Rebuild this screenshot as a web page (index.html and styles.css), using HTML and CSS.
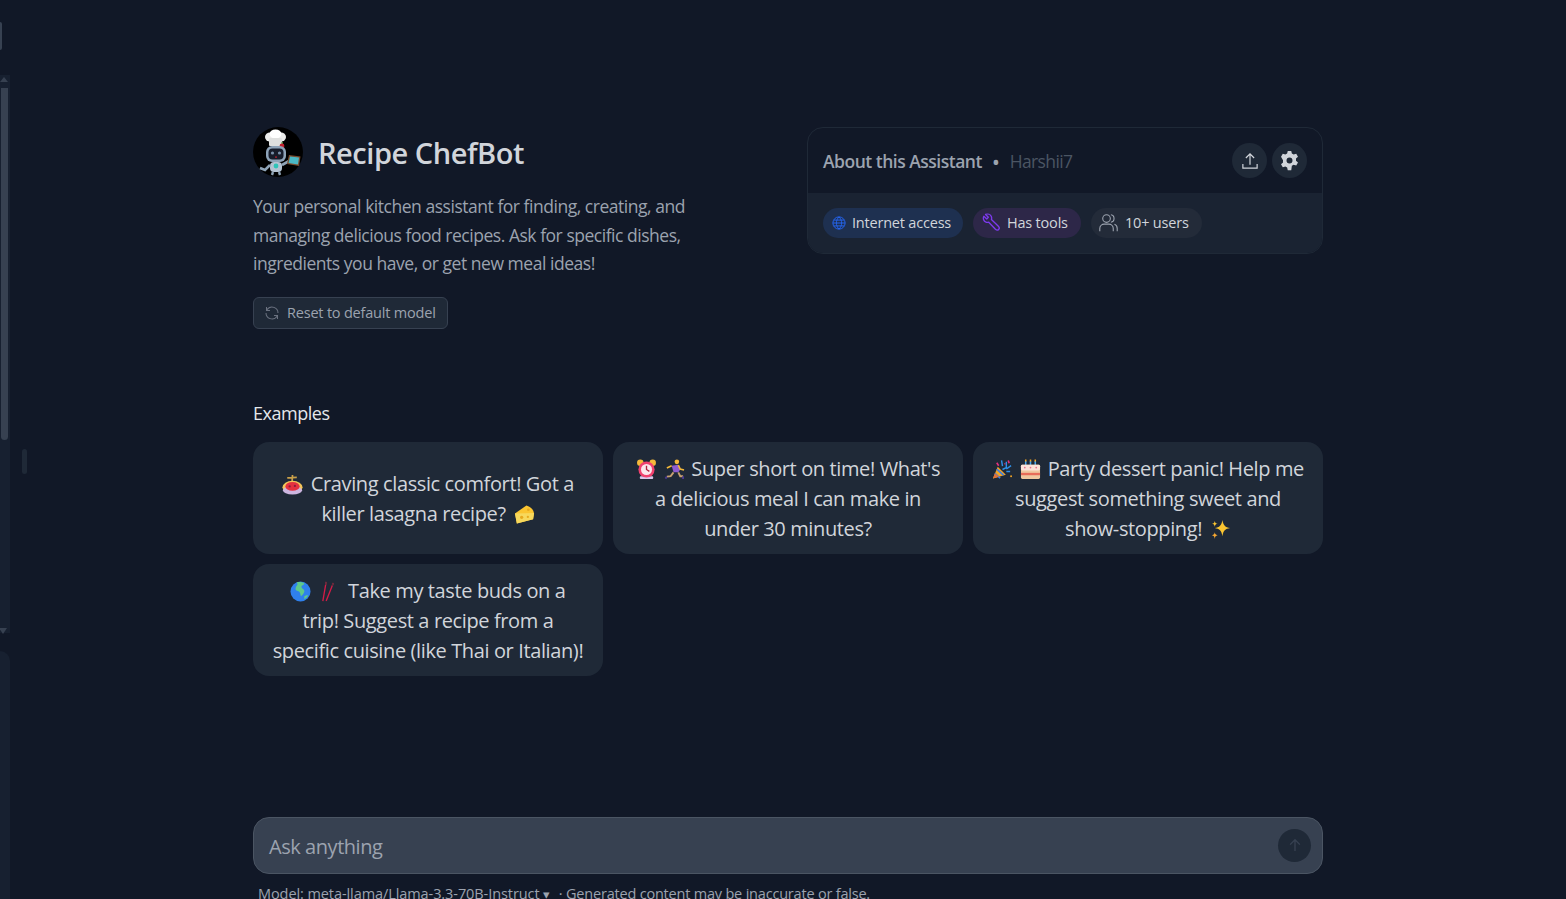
FILE: index.html
```html
<!DOCTYPE html>
<html lang="en">
<head>
<meta charset="utf-8">
<title>Recipe ChefBot</title>
<link rel="stylesheet" href="styles.css">
</head>
<body>
<div class="app">
  <aside class="rail">
    <div class="rail-top"></div>
    <div class="scroll">
      <span class="scroll-up"></span>
      <span class="scroll-thumb"></span>
      <span class="scroll-down"></span>
    </div>
    <div class="rail-foot"></div>
  </aside>
  <span class="rail-handle"></span>
  <main class="main">
    <div class="column">
      <section class="head">
        <div class="intro">
          <div class="title-row">
            <svg class="avatar" viewBox="0 0 50 50">
              <circle cx="25" cy="25" r="25" fill="#000"/>
              <ellipse cx="17" cy="10" rx="5" ry="4.500" fill="#ececea"/>
              <ellipse cx="28" cy="10" rx="5" ry="4.500" fill="#ececea"/>
              <ellipse cx="22.500" cy="7" rx="6" ry="4.500" fill="#fff"/>
              <rect x="16" y="11" width="13" height="8" rx="1" fill="#dfe0df"/>
              <rect x="28.500" y="15" width="1.500" height="2" fill="#4c8a3d"/>
              <circle cx="29" cy="19" r="2.400" fill="#c2202e"/>
              <rect x="13" y="19" width="20" height="16" rx="6" fill="#8ea3b8"/>
              <rect x="15.500" y="21.500" width="15" height="11" rx="4" fill="#171c2a"/>
              <circle cx="19.500" cy="26" r="1.600" fill="#7a8fa8"/>
              <circle cx="26.500" cy="26" r="1.600" fill="#7a8fa8"/>
              <rect x="22" y="29.500" width="2" height="1.200" fill="#c2202e"/>
              <rect x="17" y="35" width="12" height="10" rx="4" fill="#b4c3d2"/>
              <circle cx="23" cy="39" r="2.400" fill="#2fc4b8"/>
              <path d="M17 38 L12 43 L7 41" stroke="#8ea3b6" stroke-width="2.600" fill="none"/>
              <path d="M29 38 L36 34" stroke="#8ea3b6" stroke-width="2.600" fill="none"/>
              <path d="M20 45 L19 48 M26 45 L27 48" stroke="#8ea3b6" stroke-width="2.400"/>
              <path d="M36 28 L47.500 29.500 L46 39 L34 37 Z" fill="#7a4a2c"/>
              <path d="M37 29.500 L46 30.500 L45 37.500 L35.500 36 Z" fill="#4ab7c4"/>
            </svg>
            <h1 class="title">Recipe ChefBot</h1>
          </div>
          <p class="desc">Your personal kitchen assistant for finding, creating, and managing delicious food recipes. Ask for specific dishes, ingredients you have, or get new meal ideas!</p>
          <button class="reset">
            <svg class="reset-icon" viewBox="0 0 32 32" fill="currentColor"><path d="M12 10H6.780A11 11 0 0 1 27 16h2A13 13 0 0 0 6 7.680V4H4v8h8zm8 12h5.220A11 11 0 0 1 5 16H3a13 13 0 0 0 23 8.320V28h2v-8h-8z"/></svg>
            Reset to default model
          </button>
        </div>
        <div class="about">
          <div class="about-top">
            <div class="about-title"><strong>About this Assistant</strong><span class="dot">•</span><span class="author">Harshii7</span></div>
            <div class="about-actions">
              <span class="round"><svg class="ic-share" viewBox="0 0 24 24" fill="none" stroke="currentColor" stroke-width="1.600"><path d="M12 17V2.500M6.500 8l5.500-5.500L17.500 8M2.500 16v5.500h19V16"/></svg></span>
              <span class="round"><svg class="ic-gear" viewBox="0 0 24 24" fill="currentColor"><path fill-rule="evenodd" d="M10 1h4l.7 3.100a8 8 0 0 1 2 1.150l3-1 2 3.500-2.300 2.100a8 8 0 0 1 0 2.300l2.300 2.100-2 3.500-3-1a8 8 0 0 1-2 1.150L14 23h-4l-.7-3.100a8 8 0 0 1-2-1.150l-3 1-2-3.500 2.300-2.100a8 8 0 0 1 0-2.300L2.300 7.750l2-3.500 3 1a8 8 0 0 1 2-1.150zM12 8.600a3.400 3.400 0 1 0 0 6.800 3.400 3.400 0 0 0 0-6.800z"/></svg></span>
            </div>
          </div>
          <div class="about-tags">
            <span class="tag tag-blue"><svg class="ic-globe" viewBox="0 0 24 24" fill="none" stroke="currentColor" stroke-width="1.700"><circle cx="12" cy="12" r="10.500"/><path d="M1.500 12h21M12 1.500c-6 6-6 15 0 21M12 1.500c6 6 6 15 0 21M3 7h18M3 17h18"/></svg><span class="tag-text">Internet access</span></span>
            <span class="tag tag-purple"><svg class="ic-wrench" viewBox="0 0 24 24" fill="none" stroke="currentColor" stroke-width="1.700" stroke-linejoin="round"><path d="M4.500 1.800 8 5.300 6 7.500 2.300 4.200C1 7 2 10.500 5 11.600c1.300.5 2.500.3 3.500 0L17 20.500c1.200 1.200 3 1.300 4 .3s.9-2.800-.3-4l-8.800-8.600c.4-1.200.4-2.500-.1-3.700C10.700 1.700 7.300.7 4.500 1.800z"/></svg><span class="tag-text">Has tools</span></span>
            <span class="tag tag-gray"><svg class="ic-users" viewBox="0 0 24 24" fill="none" stroke="currentColor" stroke-width="1.400"><circle cx="9.500" cy="7" r="4.800"/><path d="M1 23v-3.500c0-3.300 2.700-5.500 5.500-5.500h6c2.800 0 5.500 2.200 5.500 5.500V23M15 2.300c2.500.4 4 2.500 4 4.700s-1.500 4.300-4 4.700M19.500 14.300c2 .7 3.500 2.700 3.500 5.200V23"/></svg><span class="tag-text">10+ users</span></span>
          </div>
        </div>
      </section>

      <section class="examples">
        <h2 class="examples-title">Examples</h2>
        <div class="grid">
          <button class="card">
            <svg class="emoji" viewBox="0 0 22 22"><path d="M11 1 10.500 9M5.500 4l10-.5" stroke="#c9a04a" stroke-width="1.800" fill="none"/><ellipse cx="11" cy="14" rx="10.500" ry="7" fill="#f2c45a"/><ellipse cx="11" cy="17" rx="10" ry="4.500" fill="#cdb6e0"/><ellipse cx="11" cy="13" rx="7.500" ry="4.500" fill="#e5303f"/><circle cx="8" cy="13" r="1.200" fill="#8c1c3a"/><circle cx="13.500" cy="12.500" r="1.200" fill="#8c1c3a"/></svg>
            Craving classic comfort! Got a killer lasagna recipe?
            <svg class="emoji emoji-end" viewBox="0 0 22 22"><path d="M1 10 13 1.500c4 1 7.500 4 8 8.500L20 16 3 20.500z" fill="#fbc531"/><path d="M1 10 21 9.500 20 16 3 20.500z" fill="#f7d85c"/><circle cx="8" cy="14" r="1.700" fill="#e7a91e"/><circle cx="15" cy="6" r="1.400" fill="#e7a91e"/><circle cx="14.500" cy="13.500" r="1.200" fill="#e7a91e"/></svg>
          </button>
          <button class="card">
            <svg class="emoji emoji-tight" viewBox="0 0 22 22"><circle cx="4.500" cy="4" r="3.400" fill="#f5b93a"/><circle cx="17.500" cy="4" r="3.400" fill="#f5b93a"/><rect x="4" y="18" width="14" height="3" rx="1" fill="#d9c6ea"/><circle cx="11" cy="11" r="8.500" fill="#f0406e"/><circle cx="11" cy="11" r="5.800" fill="#fbe6ec"/><path d="M11 7v4l3 2" stroke="#b0203e" stroke-width="1.400" fill="none"/></svg>
            <svg class="emoji emoji-tight" viewBox="0 0 22 22"><circle cx="13.500" cy="3" r="2.400" fill="#f5b93a"/><path d="M8 7l7-1 2 5-2 3H10z" fill="#8f5ccf"/><path d="M8 7 3 9.500M15 6.500l2 4 4 1" stroke="#f5b93a" stroke-width="1.700" fill="none"/><path d="M10 14l-3 4-4 .5M15 14l2 4h3" stroke="#c7a070" stroke-width="2" fill="none"/><path d="M3 18.500 1.500 20.500M20 18v3" stroke="#4a3a90" stroke-width="2"/></svg>
            Super short on time! What's a delicious meal I can make in under 30 minutes?
          </button>
          <button class="card">
            <svg class="emoji emoji-tight" viewBox="0 0 22 22"><path d="M1 20.500 6 8l8.500 8.500z" fill="#f5a623"/><path d="M3 15l5.500 5M5 10.500l7 6.500" stroke="#3f7fe0" stroke-width="1.800"/><path d="M1 20.500l2-5.500 4.500 3.500z" fill="#e0703a"/><path d="M10 1.500l1 6M15 3v6l-4 2M20 7l-5 3.500M19 13h-4" stroke="#2f90e8" stroke-width="1.500" fill="none"/><path d="M5 4l2 3M13 5h1M17 1.500l1 3" stroke="#e5307f" stroke-width="1.700"/><circle cx="20" cy="18" r="1" fill="#f5a623"/></svg>
            <svg class="emoji emoji-tight" viewBox="0 0 22 22"><path d="M6 2v5M11 2v5M16 2v5" stroke="#4aa6e8" stroke-width="1.600"/><path d="M6 .5v2M11 .5v2M16 .5v2" stroke="#f5a623" stroke-width="1.600"/><rect x="1" y="6" width="20" height="15" rx="1.500" fill="#f0c8a0"/><rect x="1" y="6" width="20" height="6" rx="1.500" fill="#fde3d8"/><rect x="1" y="14.500" width="20" height="2.500" fill="#e86d5a"/><circle cx="5" cy="9" r=".9" fill="#e8708f"/><circle cx="11" cy="9" r=".9" fill="#e8708f"/><circle cx="17" cy="9" r=".9" fill="#e8708f"/></svg>
            Party dessert panic! Help me suggest something sweet and show-stopping!
            <svg class="emoji emoji-end" viewBox="0 0 22 22"><path d="M13 1c1 6 3 7.500 8 8.500-5 1-7 2.500-8 8.500-1-6-3-7.500-8-8.500 5-1 7-2.500 8-8.500z" fill="#fbc531"/><path d="M5 2c.4 2 1 2.600 3 3-2 .4-2.600 1-3 3-.4-2-1-2.600-3-3 2-.4 2.600-1 3-3z" fill="#fbc531"/><path d="M5 14c.4 1.900.9 2.500 3 3-2.100.5-2.600 1.100-3 4-.4-2.900-.9-3.500-3-4 2.100-.5 2.600-1.100 3-3z" fill="#f7a832"/></svg>
          </button>
          <button class="card">
            <svg class="emoji" viewBox="0 0 22 22"><circle cx="11" cy="11" r="10.500" fill="#2f80ec"/><path d="M7 1.500c3-1 7 0 8 1-.5 2-3 1.500-3 3.500s2.500 2 3 4-2 5-3.500 6c-1-2-.5-4-2-5S5 10 6 7s3-3 1-5.500z" fill="#5ec98a"/><path d="M15 16c1.500-1 3-1 4-1-1 2.500-2.500 3.500-4 4z" fill="#5ec98a"/></svg>
            <svg class="emoji" viewBox="0 0 22 22"><path d="M4 21 7.500 1M7.500 21 15 2" stroke="#d31c46" stroke-width="1.400" fill="none"/><path d="M7 4 7.500 1M14 5l1-3" stroke="#55303c" stroke-width="1.400"/></svg>
            Take my taste buds on a trip! Suggest a recipe from a specific cuisine (like Thai or Italian)!
          </button>
        </div>
      </section>

      <section class="composer">
        <div class="input">
          <span class="placeholder">Ask anything</span>
          <span class="send"><svg viewBox="0 0 24 24" fill="none" stroke="currentColor" stroke-width="1.800"><path d="M12 20V5M5.500 11.500 12 5l6.500 6.500"/></svg></span>
        </div>
        <p class="note">Model: meta-llama/Llama-3.3-70B-Instruct <span class="caret">▾</span> <span class="note-tail">· Generated content may be inaccurate or false.</span></p>
      </section>
    </div>
  </main>
</div>
</body>
</html>
```

FILE: styles.css
```css
* { box-sizing: border-box; }
html, body { margin: 0; height: 100%; overflow: hidden; }
body {
  background: #111827;
  color: #e5e7eb;
  font-family: "Open Sans", "Noto Sans", sans-serif;
}
.app { position: relative; display: flex; height: 899px; }

.rail { width: 10px; flex: none; display: flex; flex-direction: column; }
.rail-top {
  height: 28px; width: 2px; margin-top: 22px; margin-bottom: 25px;
  background: #374151; border-radius: 0 3px 3px 0;
}
.scroll {
  width: 10px; height: 558px; background: #172030;
  display: flex; flex-direction: column; align-items: center; position: relative;
}
.scroll-up { width: 0; height: 0; border: 4.500px solid transparent; border-top: 0; border-bottom: 5px solid #374151; margin-top: 2px; margin-left: -2px; }
.scroll-thumb { width: 7px; height: 352px; margin-top: 6px; margin-left: -2px; background: #374151; border-radius: 0 0 4px 4px; }
.scroll-down { position: absolute; bottom: -1px; left: -1px; width: 0; height: 0; border: 4.500px solid transparent; border-bottom: 0; border-top: 6px solid #374151; }
.rail-foot { flex: 1; margin-top: 18px; background: #172030; border-radius: 0 10px 0 0; }
.rail-handle {
  position: absolute; left: 22px; top: 449px; width: 5px; height: 25px;
  border-radius: 3px; background: #1f2937;
}

.main { flex: 1; min-width: 0; }
.column { width: 1070px; margin: 0 auto; padding-top: 127px; }

.head { display: flex; justify-content: space-between; align-items: flex-start; }
.intro { width: 440px; }
.title-row { display: flex; align-items: center; gap: 15px; }
.avatar { width: 50px; height: 50px; flex: none; }
.title { margin: 2px 0 0; font-size: 29px; line-height: 48px; font-weight: 600; color: #d1d5db; letter-spacing: -.45px; }
.desc { margin: 15px 0 0; font-size: 17.500px; line-height: 28.500px; color: #9ca3af; letter-spacing: -.47px; }
.reset {
  display: inline-flex; align-items: center; gap: 6px;
  margin-top: 19px; height: 32px; width: 195px; padding: 0 10px;
  background: #1f2937; border: 1px solid #374151; border-radius: 6px;
  color: #9ca3af; font: inherit; font-size: 14.500px; letter-spacing: -.2px; white-space: nowrap;
}
.reset-icon { width: 16px; height: 16px; flex: none; color: #6b7280; margin-right: 1px; }

.about {
  width: 516px; height: 127px; border: 1px solid #1f2937; border-radius: 16px; overflow: hidden;
}
.about-top { height: 65px; display: flex; align-items: center; justify-content: space-between; padding: 0 15px 0 15px; }
.about-title { font-size: 17.500px; color: #9ca3af; letter-spacing: -.5px; display: flex; align-items: center; }
.about-title strong { font-weight: 600; }
.dot { margin: 0 10px; color: #9ca3af; font-size: 22px; line-height: 1; }
.author { color: #4b5563; letter-spacing: -.6px; }
.about-actions { display: flex; gap: 5px; }
.round { width: 35px; height: 35px; border-radius: 50%; background: #1f2937; color: #d1d5db; display: flex; align-items: center; justify-content: center; }
.ic-share { width: 18px; height: 18px; }
.ic-gear { width: 21px; height: 21px; }
.about-tags { height: 61px; background: #1a2332; display: flex; align-items: center; gap: 10px; padding: 0 15px 2px; }
.tag { height: 30px; border-radius: 15px; display: inline-flex; align-items: center; font-size: 14.500px; color: #d1d5db; letter-spacing: -.2px; }
.tag-text { white-space: nowrap; }
.tag-blue { width: 140px; padding-left: 9px; background: #1e3050; gap: 6px; }
.tag-purple { width: 108px; padding-left: 9px; background: #2d2748; gap: 6px; }
.tag-gray { width: 111px; padding-left: 8px; background: #232b39; gap: 7px; }
.ic-globe { width: 14px; height: 14px; color: #2563eb; flex: none; }
.ic-wrench { width: 19px; height: 19px; color: #7c3aed; flex: none; }
.ic-users { width: 19px; height: 19px; color: #9ca3af; flex: none; }

.examples { margin-top: 70px; }
.examples-title { margin: 0 0 15px; font-size: 18px; line-height: 28px; font-weight: 400; color: #e5e7eb; letter-spacing: -.47px; }
.grid { display: grid; grid-template-columns: repeat(3, 350px); grid-auto-rows: 112px; gap: 10px; }
.card {
  background: #1f2937; border: 0; border-radius: 16px; padding: 2px 19px 0;
  color: #d1d5db; font: inherit; font-size: 20px; line-height: 30px; letter-spacing: -.38px;
  text-align: center;
}
.emoji { width: 21px; height: 21px; vertical-align: -4px; margin: 0 3px 0 0; }
.emoji-tight { margin-right: 2px; }
.emoji-end { margin: 0 0 0 3px; }

.composer { margin-top: 141px; }
.input {
  height: 57px; border: 1px solid #4b5563; border-radius: 16px; background: #374151;
  display: flex; align-items: center; justify-content: space-between; padding: 0 11px 0 15px;
}
.placeholder { font-size: 20px; color: #9ca3af; letter-spacing: -.45px; margin-top: 2px; }
.send { width: 33px; height: 33px; border-radius: 50%; background: #1f2937; color: #374151; display: flex; align-items: center; justify-content: center; }
.send svg { width: 18px; height: 18px; }
.note { margin: 10px 0 0 5px; font-size: 14.500px; line-height: 20px; color: #9ca3af; letter-spacing: -.08px; white-space: nowrap; }
.caret { font-size: 13px; margin-right: 5px; }
.note-tail { letter-spacing: -.2px; }
```
